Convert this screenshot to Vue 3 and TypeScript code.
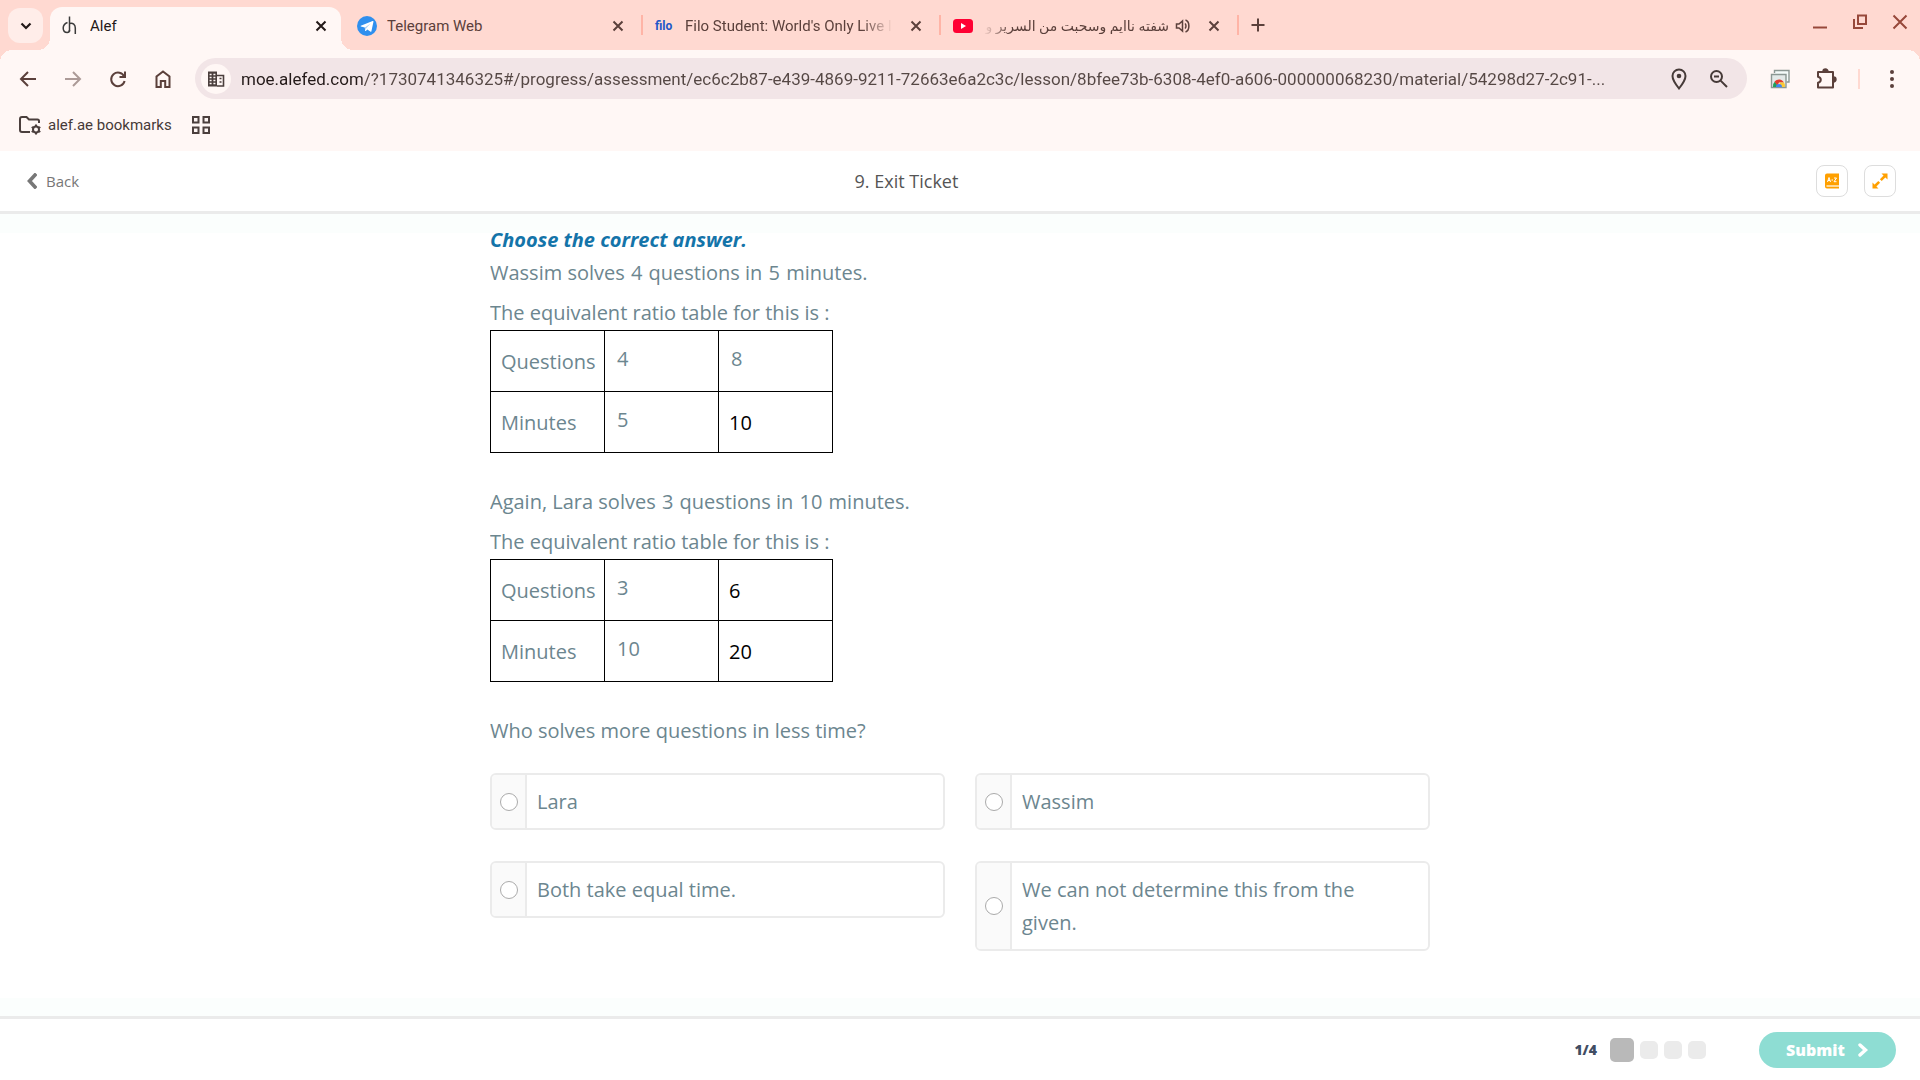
<script setup lang="ts">
import { ref } from 'vue'

interface Cell {
  value: string
  kind: 'math' | 'plain'
}
interface RatioRow {
  label: string
  cells: Cell[]
}
interface RatioBlock {
  who: string
  count: string
  minutes: string
  rows: RatioRow[]
}

const url = ref(
  'moe.alefed.com/?1730741346325#/progress/assessment/ec6c2b87-e439-4869-9211-72663e6a2c3c/lesson/8bfee73b-6308-4ef0-a606-000000068230/material/54298d27-2c91-...',
)

const blocks: RatioBlock[] = [
  {
    who: 'Wassim solves',
    count: '4',
    minutes: '5',
    rows: [
      { label: 'Questions', cells: [{ value: '4', kind: 'math' }, { value: '8', kind: 'math' }] },
      { label: 'Minutes', cells: [{ value: '5', kind: 'math' }, { value: '10', kind: 'plain' }] },
    ],
  },
  {
    who: 'Again, Lara solves',
    count: '3',
    minutes: '10',
    rows: [
      { label: 'Questions', cells: [{ value: '3', kind: 'math' }, { value: '6', kind: 'plain' }] },
      { label: 'Minutes', cells: [{ value: '10', kind: 'math' }, { value: '20', kind: 'plain' }] },
    ],
  },
]

const options: string[] = [
  'Lara',
  'Wassim',
  'Both take equal time.',
  'We can not determine this from the given.',
]
const answer = ref<string>('')
const current = 1
const total = 4
</script>

<template>
  <div class="window">
    <header class="tabstrip">
      <button class="tab-search" aria-label="Search tabs">
        <svg width="12" height="8" viewBox="0 0 12 8"><path d="M1.5 1.5 6 6l4.500-4.500" fill="none" stroke="#231918" stroke-width="2.200" /></svg>
      </button>
      <div class="tab active">
        <svg class="favicon" width="20" height="22" viewBox="0 0 20 22" fill="none" stroke="#3b3b3b" stroke-width="1.500">
          <path d="M9.500 1.500v15" />
          <path d="M7.500 7.500c-2.700 1-4.300 3-4.300 5.500 0 3 2 4.500 4 4.500 1.500 0 2.300-.8 2.300-2.500" />
          <path d="M9.500 8.500c3.500-1 5.800 1.200 5.800 4.500v6" />
        </svg>
        <span class="tab-title">Alef</span>
        <button class="close" aria-label="Close tab">
          <svg width="12" height="12" viewBox="0 0 12 12"><path d="M1.500 1.500l9 9M10.500 1.500l-9 9" /></svg>
        </button>
      </div>
      <div class="tab">
        <svg class="favicon" width="20" height="20" viewBox="0 0 20 20">
          <circle cx="10" cy="10" r="10" fill="#2f8fee" />
          <path d="M3.800 9.800 15.600 5c.6-.2 1 .2.800.9l-2 9.300c-.1.600-.6.800-1.100.4L10.300 13.400l-1.500 1.500c-.3.300-.6.200-.7-.2l-.3-3.200-3.900-1.100c-.4-.1-.4-.4-.1-.6z" fill="#fff" />
          <path d="M7.900 11.500 13.500 7.600l-4.300 4.700-.4 2.300z" fill="#a9cff5" />
        </svg>
        <span class="tab-title">Telegram Web</span>
        <button class="close" aria-label="Close tab">
          <svg width="12" height="12" viewBox="0 0 12 12"><path d="M1.500 1.500l9 9M10.500 1.500l-9 9" /></svg>
        </button>
      </div>
      <div class="tab divided">
        <span class="favicon filo">filo</span>
        <span class="tab-title fade">Filo Student: World's Only Live I</span>
        <button class="close" aria-label="Close tab">
          <svg width="12" height="12" viewBox="0 0 12 12"><path d="M1.500 1.500l9 9M10.500 1.500l-9 9" /></svg>
        </button>
      </div>
      <div class="tab divided">
        <svg class="favicon" width="20" height="14" viewBox="0 0 20 14">
          <rect width="20" height="14" rx="3.500" fill="#ff0033" />
          <path d="M8 4v6l5-3z" fill="#fff" />
        </svg>
        <span class="tab-title fade rtl" dir="rtl" lang="ar">شفته ناايم وسحبت من السرير و</span>
        <svg class="speaker" width="16" height="16" viewBox="0 0 16 16" fill="none" stroke="#5b403b" stroke-width="1.500">
          <path d="M1.500 6v4h2.500l3.500 3V3L4 6z" />
          <path d="M10 5.500c1.300 1 1.300 4 0 5M10.500 2c4.500 1.500 4.500 10.500 0 12" />
        </svg>
        <button class="close" aria-label="Close tab">
          <svg width="12" height="12" viewBox="0 0 12 12"><path d="M1.500 1.500l9 9M10.500 1.500l-9 9" /></svg>
        </button>
      </div>
      <button class="new-tab divided" aria-label="New tab">
        <svg width="14" height="14" viewBox="0 0 14 14"><path d="M7 .500v13M.500 7h13" stroke="#5b403b" stroke-width="2" /></svg>
      </button>
      <div class="window-controls">
        <button aria-label="Minimize">
          <svg width="16" height="16" viewBox="0 0 16 16"><path d="M1 13.500h14" /></svg>
        </button>
        <button aria-label="Restore">
          <svg width="16" height="16" viewBox="0 0 16 16"><path d="M6 1.500h8v8.500H6zM2 5v9h9" /></svg>
        </button>
        <button aria-label="Close window">
          <svg width="16" height="16" viewBox="0 0 16 16"><path d="M1.500 1.500l13 13M14.500 1.500l-13 13" /></svg>
        </button>
      </div>
    </header>

    <div class="chrome">
      <div class="toolbar">
        <div class="nav">
          <button aria-label="Back">
            <svg width="20" height="20" viewBox="0 0 20 20"><path d="M18 10H3M10 3l-7 7 7 7" /></svg>
          </button>
          <button class="dim" aria-label="Forward" disabled>
            <svg width="20" height="20" viewBox="0 0 20 20"><path d="M2 10h15M10 3l7 7-7 7" /></svg>
          </button>
          <button aria-label="Reload">
            <svg width="20" height="20" viewBox="0 0 20 20"><path d="M16.200 7.500A6.800 6.800 0 1 0 16.600 12M17 2.500v5.500h-5.500" /></svg>
          </button>
          <button aria-label="Home">
            <svg width="20" height="20" viewBox="0 0 20 20"><path d="M3.500 18V7.500L10 2.500l6.500 5V18h-4.300v-6H7.800v6z" /></svg>
          </button>
        </div>
        <div class="omnibox">
          <button class="site" aria-label="View site information">
            <svg width="18" height="18" viewBox="0 0 18 18">
              <path d="M1 1.500h9v15H1z" fill="#4b3f3d" />
              <path d="M10 5.500h6.500v10.500H10" fill="none" stroke="#4b3f3d" stroke-width="1.600" />
              <path d="M2.600 4.500h2M6.400 4.500h2M2.600 7.500h2M6.400 7.500h2M2.600 10.500h2M6.400 10.500h2M2.600 13.500h2M6.400 13.500h2" stroke="#fff7f5" stroke-width="1.600" />
              <path d="M12.500 8.500h2M12.500 12h2" stroke="#4b3f3d" stroke-width="1.600" />
            </svg>
          </button>
          <input v-model="url" class="url" type="text" aria-label="Address" spellcheck="false" />
          <button aria-label="Location">
            <svg width="20" height="22" viewBox="0 0 20 22"><path d="M10 20.500C6 15.500 3.500 12 3.500 8a6.500 6.500 0 0 1 13 0c0 4-2.500 7.500-6.500 12.500z" /><circle cx="10" cy="8" r="2.300" fill="#463a38" stroke="none" /></svg>
          </button>
          <button aria-label="Zoom">
            <svg width="20" height="20" viewBox="0 0 20 20"><circle cx="7.500" cy="7.500" r="5.500" /><path d="M5 7.500h5M11.600 11.600l6.400 6.400" /></svg>
          </button>
        </div>
        <div class="extensions">
          <button aria-label="Extension">
            <svg class="pictures" width="20" height="20" viewBox="0 0 20 20">
              <path d="M4.500 4V1.500h14.500v11.500h-2.500" fill="#f4fbfa" stroke="#8b9793" stroke-width="1.400" />
              <path d="M1.500 5.500h14.500v13H1.500z" fill="#e3e9e8" stroke="#8b9793" stroke-width="1.400" />
              <path d="M3 18a6 6 0 0 1 2-5.500l3.500 5.500z" fill="#1ea05a" />
              <path d="M4.500 12.800a5.600 5.600 0 0 1 9.500.7H9l-1.500 3z" fill="#e33b2e" />
              <path d="M9.500 13.500h4.500a6 6 0 0 1 .8 4.500H10z" fill="#fcc934" />
              <path d="M6 18a3 3 0 0 1 6 0z" fill="#4285f4" />
            </svg>
          </button>
          <button aria-label="Extensions">
            <svg width="24" height="24" viewBox="0 0 24 24"><path d="M4 5h15v15.500H4v-4.800c3.700-.8 3.700-5.200 0-6z" stroke-linejoin="round" /><path d="M9.300 4.500a2.200 2.200 0 0 1 4.400 0zM19.500 10.300a2.200 2.200 0 0 1 0 4.400z" fill="#5b403b" /></svg>
          </button>
          <span class="rule"></span>
          <button aria-label="Menu">
            <svg class="dots" width="20" height="20" viewBox="0 0 20 20"><circle cx="10" cy="3" r="2" /><circle cx="10" cy="10" r="2" /><circle cx="10" cy="17" r="2" /></svg>
          </button>
        </div>
      </div>
      <nav class="bookmarks">
        <a class="bookmark" href="#">
          <svg width="24" height="20" viewBox="0 0 24 20" fill="none" stroke="#4b3f3d" stroke-width="2">
            <path d="M12 17H4a2 2 0 0 1-2-2V4a2 2 0 0 1 2-2h4.500l2.500 2.500h8.500a1.500 1.500 0 0 1 1.500 1.500v2" />
            <circle cx="18" cy="14.500" r="3" />
            <path d="M18 9.500v2M18 17.500v2M13.700 12l1.700 1M20.600 16l1.700 1M13.700 17l1.700-1M20.600 13l1.700-1" />
          </svg>
          alef.ae bookmarks
        </a>
        <button class="apps" aria-label="Apps">
          <svg width="18" height="18" viewBox="0 0 18 18" fill="none" stroke="#4b3f3d" stroke-width="2"><path d="M1 1h5.500v5.500H1zM11.500 1H17v5.500h-5.500zM1 11.500h5.500V17H1zM11.500 11.500H17V17h-5.500z" /></svg>
        </button>
      </nav>
    </div>

    <div class="lesson-bar">
      <a class="back" href="#">
        <svg width="11" height="16" viewBox="0 0 11 16"><path d="M9 2 3.500 8 9 14" fill="none" stroke="#777" stroke-width="3.600" stroke-linecap="square" /></svg>
        Back
      </a>
      <h1>9. Exit Ticket</h1>
      <div class="tools">
        <button aria-label="Glossary">
          <svg width="16" height="16" viewBox="0 0 16 16">
            <path d="M3 .500h12v15H3a2 2 0 0 1-2-2v-11a2 2 0 0 1 2-2z" fill="#ffa000" />
            <path d="M2.500 13h12.500" stroke="#fff" stroke-width="1.200" />
            <path d="M3.500 9 5 4.500 6.500 9M4 7.500h2M7.500 7h1.500M10 5h2.500L10 8.700h2.500" fill="none" stroke="#fff" stroke-width="1" />
          </svg>
        </button>
        <button aria-label="Full screen">
          <svg width="16" height="16" viewBox="0 0 16 16" fill="#ffa000"><path d="M9.500 .500H15.500V6.500zM.500 9.500V15.500H6.500z" /><path d="M14 2 8.800 7.200M7.200 8.800 2 14" stroke="#ffa000" stroke-width="2.600" /></svg>
        </button>
      </div>
    </div>

    <main>
      <form id="quiz" class="sheet" @submit.prevent>
        <div class="question">
          <h2>Choose the correct answer.</h2>
          <section v-for="block in blocks" :key="block.who" class="block">
            <p>
              {{ block.who }} <span class="num">{{ block.count }}</span> questions in
              <span class="num">{{ block.minutes }}</span> minutes.
            </p>
            <p>The equivalent ratio table for this is :</p>
            <table>
              <tbody>
                <tr v-for="row in block.rows" :key="row.label">
                  <th scope="row">{{ row.label }}</th>
                  <td v-for="(cell, i) in row.cells" :key="i" :class="cell.kind">{{ cell.value }}</td>
                </tr>
              </tbody>
            </table>
          </section>
          <p id="prompt">Who solves more questions in less time?</p>
          <div class="options" role="radiogroup" aria-labelledby="prompt">
            <label v-for="option in options" :key="option" class="option">
              <span class="pick"><input v-model="answer" type="radio" name="answer" :value="option" /></span>
              <span class="option-text">{{ option }}</span>
            </label>
          </div>
        </div>
      </form>
    </main>

    <footer>
      <span class="count">{{ current }}/{{ total }}</span>
      <div class="steps">
        <span v-for="n in total" :key="n" class="step" :class="{ on: n === current }"></span>
      </div>
      <button class="submit" type="submit" form="quiz">
        Submit
        <svg width="12" height="14" viewBox="0 0 12 14"><path d="M3 2l5.500 5L3 12" fill="none" stroke="#fff" stroke-width="3.400" stroke-linecap="round" /></svg>
      </button>
    </footer>
  </div>
</template>

<style>
body {
  margin: 0;
}
</style>

<style scoped>
.window {
  display: flex;
  flex-direction: column;
  min-height: 100vh;
  background: #fff;
  color: #6c868f;
  font-family: 'Open Sans', 'Noto Sans', sans-serif;
}
* {
  box-sizing: border-box;
}
button {
  display: flex;
  align-items: center;
  justify-content: center;
  padding: 0;
  border: 0;
  background: none;
  font-family: inherit;
}
a {
  color: inherit;
  text-decoration: none;
}
svg {
  flex: none;
}

/* Tab strip */
.tabstrip {
  display: flex;
  align-items: flex-end;
  height: 50px;
  padding-left: 8px;
  background: #ffd9d1;
  font-family: Roboto, 'Noto Sans', 'DejaVu Sans', sans-serif;
}
.tab-search {
  width: 35px;
  height: 35px;
  margin: 0 7px 7px 0;
  border-radius: 12px;
  background: #ffede9;
}
.tab {
  position: relative;
  display: flex;
  align-items: center;
  width: 298px;
  height: 43px;
  padding: 0 15px 6px 16px;
  color: #5b403b;
  font-size: 15px;
}
.tab.active {
  width: 291px;
  padding: 0 14px 6px 10px;
  border-radius: 12px 12px 0 0;
  background: #fff7f5;
  color: #231918;
}
.tab.active::before,
.tab.active::after {
  position: absolute;
  bottom: 0;
  width: 12px;
  height: 12px;
  content: '';
}
.tab.active::before {
  right: 100%;
  background: radial-gradient(circle at 0 0, transparent 12px, #fff7f5 12px);
}
.tab.active::after {
  left: 100%;
  background: radial-gradient(circle at 100% 0, transparent 12px, #fff7f5 12px);
}
.favicon {
  flex: none;
  margin-right: 10px;
}
.filo {
  width: 20px;
  color: #2257c9;
  font-size: 12px;
  font-weight: 700;
}
.tab-title {
  flex: 1;
  overflow: hidden;
  white-space: nowrap;
}
.fade {
  mask-image: linear-gradient(to right, #000 85%, transparent);
}
.fade.rtl {
  font-size: 14px;
  mask-image: linear-gradient(to left, #000 85%, transparent);
}
.speaker {
  margin-left: 6px;
}
.close {
  width: 12px;
  height: 20px;
  margin-left: 17px;
  stroke: currentColor;
  stroke-width: 2;
  color: inherit;
}
.divided::before {
  position: absolute;
  top: 8px;
  left: 2px;
  width: 2px;
  height: 20px;
  background: #ffb4a6;
  content: '';
}
.new-tab {
  position: relative;
  width: 42px;
  height: 43px;
  padding: 0 0 7px 4px;
}
.window-controls {
  display: flex;
  gap: 24px;
  margin: 0 12px 20px auto;
}
.window-controls svg {
  fill: none;
  stroke: #97483a;
  stroke-width: 2;
}

/* Toolbar and bookmarks */
.chrome {
  background: radial-gradient(circle at 12px 12px, #fff7f5 12px, #ffd9d1 12px) 0 0 / 12px 12px no-repeat,
    radial-gradient(circle at 0 12px, #fff7f5 12px, #ffd9d1 12px) 100% 0 / 12px 12px no-repeat,
    #fff7f5;
  color: #463a38;
  font-family: Roboto, 'Noto Sans', sans-serif;
}
.toolbar {
  display: flex;
  align-items: center;
  padding: 8px 18px 0;
}
.toolbar svg {
  fill: none;
  stroke: #5b403b;
  stroke-width: 2;
}
.nav {
  display: flex;
  gap: 25px;
  margin-right: 22px;
}
.nav .dim {
  opacity: 0.5;
}
.omnibox {
  display: flex;
  flex: 1;
  align-items: center;
  gap: 20px;
  height: 41px;
  padding: 0 18px 0 6px;
  border-radius: 21px;
  background: #f2e5e7;
}
.omnibox svg {
  stroke: #463a38;
}
.omnibox .site {
  width: 30px;
  height: 30px;
  border-radius: 50%;
  background: #fff7f5;
}
.omnibox .site svg,
.toolbar .pictures {
  stroke: none;
}
.toolbar .dots {
  fill: #5b403b;
  stroke: none;
}
.url {
  flex: 1;
  min-width: 0;
  height: 30px;
  margin-left: -10px;
  padding: 0;
  border: 0;
  outline: 0;
  background: linear-gradient(to right, #231918 121px, #554744 121px);
  background-clip: text;
  color: transparent;
  font-family: inherit;
  font-size: 17px;
  text-overflow: ellipsis;
}
.extensions {
  display: flex;
  align-items: center;
  margin-left: 23px;
}
.extensions button + button {
  margin-left: 24px;
}
.rule {
  width: 2px;
  height: 20px;
  margin: 0 22px 0 20px;
  background: #ffd9d1;
}
.bookmarks {
  display: flex;
  align-items: center;
  gap: 20px;
  height: 52px;
  padding: 0 18px;
}
.bookmark {
  display: flex;
  align-items: center;
  gap: 6px;
  font-size: 15px;
}

/* Lesson header */
.lesson-bar {
  display: grid;
  grid-template-columns: 80px 1fr 187px;
  align-items: center;
  height: 63px;
  padding: 0 24px;
  border-bottom: 3px solid #ebebeb;
}
.back {
  display: flex;
  align-items: center;
  gap: 9px;
  padding-left: 2px;
  color: #777;
  font-size: 15px;
}
h1 {
  margin: 0;
  color: #555;
  font-size: 18px;
  font-weight: 400;
  text-align: center;
}
.tools {
  display: flex;
  justify-content: flex-end;
  gap: 16px;
}
.tools button {
  width: 32px;
  height: 32px;
  border: 1px solid #ddd;
  border-radius: 8px;
}

/* Question sheet */
main {
  flex: 1;
  padding: 19px 0 18px;
  background: #fbfefd;
}
.sheet {
  height: 100%;
  background: #fff;
}
.question {
  max-width: 940px;
  margin: 0 auto;
  overflow: hidden;
  padding-bottom: 47px;
  font-size: 20px;
  line-height: 33px;
}
h2 {
  margin: -10px 0 0;
  color: #1474a9;
  font-size: 20px;
  font-style: italic;
  font-weight: 700;
  line-height: 33px;
}
p {
  margin: 0;
}
.block p + p {
  margin-top: 7px;
}
.num {
  margin: 0 1px;
}
table {
  width: 343px;
  margin: 1px 0 32px;
  border-collapse: collapse;
  table-layout: fixed;
}
th,
td {
  height: 61px;
  padding: 0 10px;
  border: 1px solid #000;
  font-weight: 400;
  text-align: left;
}
.math {
  padding: 0 12px 6px;
}
.plain {
  color: #000;
}
.options {
  display: grid;
  grid-template-columns: 1fr 1fr;
  align-items: start;
  gap: 31px 30px;
  margin-top: 26px;
}
.option {
  display: flex;
  overflow: hidden;
  border: 2px solid #ebebeb;
  border-radius: 6px;
}
.pick {
  display: flex;
  flex: none;
  align-items: center;
  justify-content: center;
  width: 35px;
  border-right: 2px solid #ebebeb;
  background: #fafafa;
}
.pick input {
  width: 18px;
  height: 18px;
  margin: 0;
  border: 1px solid #aaa;
  border-radius: 50%;
  background: #fff;
  appearance: none;
}
.pick input:checked {
  border: 5px solid #8eddd3;
}
.option-text {
  padding: 10px 60px 10px 10px;
}

/* Footer */
footer {
  display: flex;
  align-items: center;
  justify-content: flex-end;
  height: 64px;
  padding: 0 24px;
  border-top: 3px solid #ebebeb;
}
.count {
  color: #414d63;
  font-size: 14px;
  font-weight: 800;
}
.steps {
  display: flex;
  align-items: center;
  gap: 6px;
  margin: 0 53px 0 13px;
}
.step {
  width: 18px;
  height: 18px;
  border-radius: 5px;
  background: #ebebeb;
}
.step.on {
  width: 24px;
  height: 24px;
  background: #b9b9b9;
}
.submit {
  gap: 12px;
  width: 137px;
  height: 36px;
  border-radius: 18px;
  background: #8eddd3;
  color: #fff;
  font-size: 16px;
  font-weight: 800;
}
</style>
